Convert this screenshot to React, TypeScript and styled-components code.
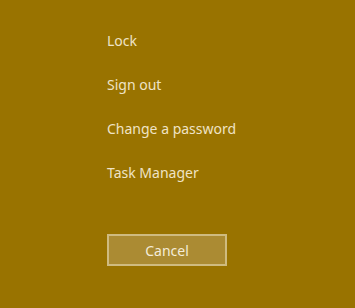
import styled, { createGlobalStyle } from 'styled-components';

const GlobalStyle = createGlobalStyle`
  html, body {
    margin: 0;
    padding: 0;
    background: #997300;
  }
  body {
    font-family: "Noto Sans", "Open Sans", sans-serif;
  }
`;

const items = ['Lock', 'Sign out', 'Change a password', 'Task Manager'];

const App = () => {
  return (
    <>
      <GlobalStyle />
      <Screen>
        <Menu>
          {items.map((item) => (
            <MenuItem key={item}>{item}</MenuItem>
          ))}
        </Menu>
        <CancelButton>Cancel</CancelButton>
      </Screen>
    </>
  );
};

const Screen = styled.div`
  width: 355px;
  height: 308px;
  box-sizing: border-box;
  padding: 18px 0 0 107px;
  display: flex;
  flex-direction: column;
  align-items: flex-start;
  background: #997300;
`;

const Menu = styled.div`
  display: flex;
  flex-direction: column;
`;

const MenuItem = styled.div`
  height: 44px;
  display: flex;
  align-items: center;
  font-size: 14px;
  color: #efe3c6;
  cursor: pointer;
`;

const CancelButton = styled.button`
  margin-top: 40px;
  width: 120px;
  height: 32px;
  box-sizing: border-box;
  border: 2px solid #cfbb80;
  background: #ab8b33;
  color: #f4ecd8;
  font-family: "Noto Sans", "Open Sans", sans-serif;
  font-size: 14px;
  padding: 0;
  cursor: pointer;
`;

export default App;
